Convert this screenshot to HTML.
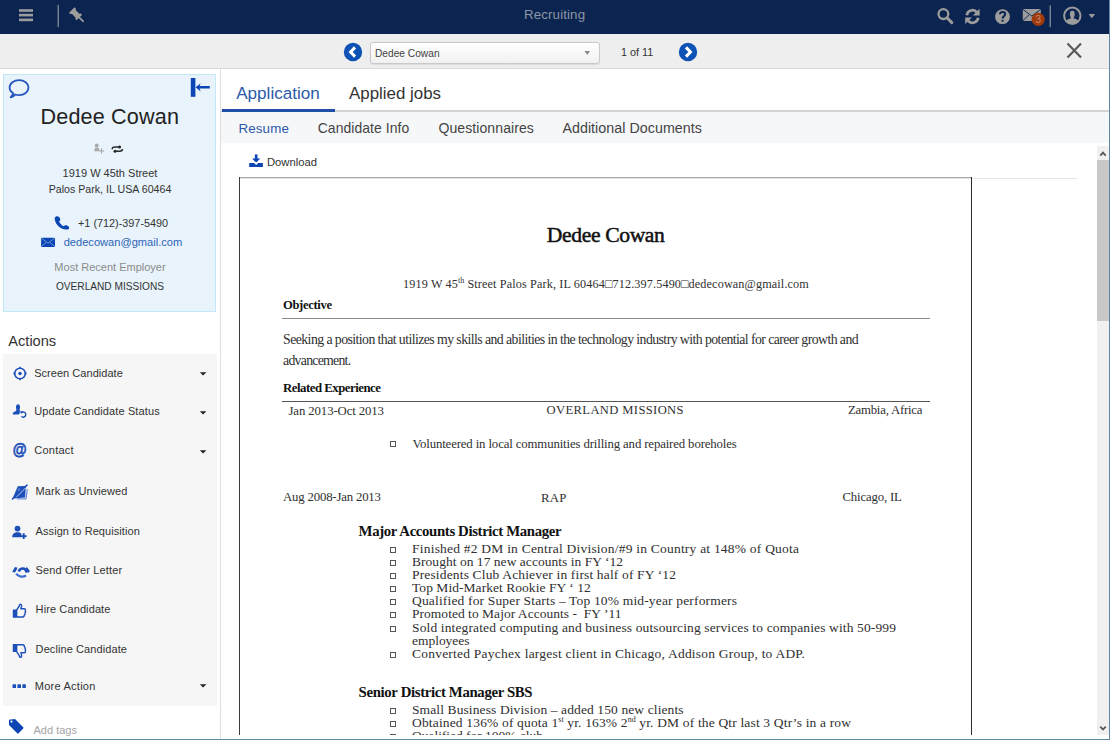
<!DOCTYPE html>
<html><head><meta charset="utf-8"><title>Recruiting</title>
<style>
html,body{margin:0;padding:0;}
body{width:1110px;height:740px;overflow:hidden;position:relative;background:#fff;font-family:'Liberation Sans', sans-serif;}
</style></head><body>
<div style="position:absolute;left:0px;top:0px;width:1110px;height:34px;background:#0b2550;"></div>
<svg style="position:absolute;left:0px;top:0px;" width="100" height="34" viewBox="0 0 100 34"><rect x="19" y="9.2" width="14" height="2.6" fill="#9c9c9c"/><rect x="19" y="13.8" width="14" height="2.6" fill="#9c9c9c"/><rect x="19" y="18.6" width="14" height="2.6" fill="#9c9c9c"/><rect x="57.6" y="5" width="1.2" height="22" fill="#8d95a0"/><g transform="translate(72.6,10.8) rotate(-45)" fill="#9c9c9c"><path d="M-3.9 -1.2 L3.9 -1.2 L3.9 0.9 L2.7 1.6 L2.7 7 L3.9 7.7 L3.9 9.6 L-3.9 9.6 L-3.9 7.7 L-2.7 7 L-2.7 1.6 L-3.9 0.9 Z"/><rect x="-0.85" y="9" width="1.7" height="6.6" rx="0.6"/></g></svg>
<div style="position:absolute;left:-45.39999999999998px;width:1200px;text-align:center;top:5.40px;height:20px;line-height:20px;font-family:'Liberation Sans', sans-serif;font-size:13.3px;font-weight:normal;color:#8d96a6;white-space:pre;letter-spacing:0.125px;">Recruiting</div>
<svg style="position:absolute;left:930px;top:0px;" width="180" height="34" viewBox="0 0 180 34"><circle cx="13.4" cy="14.1" r="4.9" fill="none" stroke="#9c9c9c" stroke-width="2.3"/><line x1="17" y1="17.8" x2="21.8" y2="22.6" stroke="#9c9c9c" stroke-width="2.9" stroke-linecap="round"/><g fill="none" stroke="#9c9c9c" stroke-width="2.7"><path d="M36.8 15.2 A5.8 5.8 0 0 1 47 12.3"/><path d="M48.2 17.8 A5.8 5.8 0 0 1 38 20.7"/></g><path d="M49.6 8.8 L49.6 15.6 L42.8 15.6 Z" fill="#9c9c9c"/><path d="M35.2 24 L35.2 17.4 L42 17.4 Z" fill="#9c9c9c"/><circle cx="72.5" cy="16.7" r="7.4" fill="#9c9c9c"/><path d="M70 14.2 C70 11.2 75.2 11.2 75.2 14.2 C75.2 16.1 72.6 16.2 72.6 18.4" fill="none" stroke="#0b2550" stroke-width="2"/><circle cx="72.6" cy="20.8" r="1.15" fill="#0b2550"/><rect x="92.8" y="9" width="18" height="12" rx="1" fill="#9c9c9c"/><path d="M93 9.5 L101.8 16 L110.6 9.5 M93 20.5 L99 15 M110.6 20.5 L104.6 15" stroke="#0b2550" stroke-width="0.9" fill="none"/><circle cx="108.2" cy="19.4" r="6.6" fill="#9e3a0e"/><text x="108.2" y="23.2" font-family="Liberation Sans" font-size="10" text-anchor="middle" fill="#cf8a68">3</text><rect x="119.6" y="5.5" width="1.2" height="21.5" fill="#8d95a0"/><circle cx="142.3" cy="15.8" r="8.2" fill="none" stroke="#9c9c9c" stroke-width="2"/><path d="M142.3 10.8 C144.2 10.8 144.9 12.4 144.7 14.6 C144.5 16.4 143.8 17.4 143.6 18.2 C145.5 18.8 147.6 19.6 148.4 21 C146.8 22.8 144.7 23.8 142.3 23.8 C139.9 23.8 137.8 22.8 136.2 21 C137 19.6 139.1 18.8 141 18.2 C140.8 17.4 140.1 16.4 139.9 14.6 C139.7 12.4 140.4 10.8 142.3 10.8 Z" fill="#9c9c9c"/><path d="M158.6 14 L165.1 14 L161.85 18.2 Z" fill="#9c9c9c"/></svg>
<div style="position:absolute;left:0px;top:34px;width:1110px;height:34px;background:#eeeeee;"></div>
<div style="position:absolute;left:0px;top:68px;width:1110px;height:1px;background:#d9d9d9;"></div>
<svg style="position:absolute;left:340px;top:40px;" width="30" height="26" viewBox="0 0 30 26"><circle cx="13" cy="12" r="9.2" fill="#0f52b5"/><path d="M15 7.4 L10.6 12 L15 16.6" fill="none" stroke="#fff" stroke-width="3" stroke-linejoin="miter"/></svg>
<svg style="position:absolute;left:675px;top:40px;" width="30" height="26" viewBox="0 0 30 26"><circle cx="13" cy="12" r="9.2" fill="#0f52b5"/><path d="M11 7.4 L15.4 12 L11 16.6" fill="none" stroke="#fff" stroke-width="3"/></svg>
<div style="position:absolute;left:370px;top:42px;width:228px;height:20px;background:linear-gradient(#ffffff,#f1f1f1);border:1px solid #c9c9c9;border-radius:3px;box-shadow:0 1px 1px rgba(0,0,0,0.08);"></div>
<div style="position:absolute;left:375px;top:45.60px;height:15px;line-height:15px;font-family:'Liberation Sans', sans-serif;font-size:10.2px;font-weight:normal;color:#444;white-space:pre;">Dedee Cowan</div>
<svg style="position:absolute;left:580px;top:48px;" width="14" height="10" viewBox="0 0 14 10"><path d="M4.5 3 L10 3 L7.25 7 Z" fill="#888"/></svg>
<div style="position:absolute;left:621px;top:44.00px;height:16px;line-height:16px;font-family:'Liberation Sans', sans-serif;font-size:10.8px;font-weight:normal;color:#333;white-space:pre;">1 of 11</div>
<svg style="position:absolute;left:1060px;top:38px;" width="30" height="28" viewBox="0 0 30 28"><path d="M7.5 5.5 L21 19.5 M21 5.5 L7.5 19.5" stroke="#5a5a5a" stroke-width="2.2"/></svg>
<div style="position:absolute;left:220px;top:69px;width:1px;height:671px;background:#dedede;"></div>
<div style="position:absolute;left:3px;top:74px;width:211px;height:236px;background:#e9f3fb;border:1px solid #c4e7f6;"></div>
<svg style="position:absolute;left:4px;top:74px;" width="30" height="26" viewBox="0 0 30 26"><path d="M9.2 19.2 C6.8 17.9 5.6 15.9 5.6 13.6 C5.6 9.3 10 6.1 15.1 6.1 C20.2 6.1 24.5 9.3 24.5 13.6 C24.5 17.9 20.2 21.1 15.1 21.1 C13.6 21.1 12.4 20.9 11.3 20.5 C10.2 21.6 8.6 22.8 6.6 23.3 C7.8 22.1 8.8 20.8 9.2 19.2 Z" fill="none" stroke="#2456bd" stroke-width="1.8" stroke-linejoin="round"/></svg>
<svg style="position:absolute;left:185px;top:74px;" width="30" height="26" viewBox="0 0 30 26"><rect x="5.8" y="4" width="4.6" height="18.8" fill="#0c45b4"/><path d="M10.6 13.3 L15.6 9.2 L14.6 12.1 L24.8 12.1 L24.8 14.6 L14.6 14.6 L15.6 17.4 Z" fill="#0c45b4"/></svg>
<div style="position:absolute;left:-490.2px;width:1200px;text-align:center;top:100.70px;height:32px;line-height:32px;font-family:'Liberation Sans', sans-serif;font-size:21.6px;font-weight:normal;color:#222;white-space:pre;letter-spacing:0.164px;">Dedee Cowan</div>
<svg style="position:absolute;left:90px;top:140px;" width="40" height="18" viewBox="0 0 40 18"><g fill="#a9a9a9"><circle cx="6.7" cy="5.4" r="1.9"/><path d="M4.3 11.2 C4.3 8.4 5.2 7.5 6.8 7.5 C8 7.5 8.8 8 9.2 9 L9.2 11.2 Z"/><rect x="8.9" y="10.4" width="5.2" height="1.1"/><rect x="10.95" y="8.3" width="1.1" height="5.3"/></g><g fill="none" stroke="#2a2a2a" stroke-width="1.5"><path d="M22.2 9.2 C22.2 7.4 23.2 7 25.2 7 L29.4 7"/><path d="M32.5 9 C32.5 10.8 31.5 11.2 29.5 11.2 L25.2 11.2"/></g><circle cx="29.6" cy="7" r="1.55" fill="#2a2a2a"/><circle cx="25.1" cy="11.2" r="1.55" fill="#2a2a2a"/></svg>
<div style="position:absolute;left:-490px;width:1200px;text-align:center;top:164.90px;height:16px;line-height:16px;font-family:'Liberation Sans', sans-serif;font-size:11px;font-weight:normal;color:#333;white-space:pre;">1919 W 45th Street</div>
<div style="position:absolute;left:-490px;width:1200px;text-align:center;top:181.30px;height:16px;line-height:16px;font-family:'Liberation Sans', sans-serif;font-size:10.65px;font-weight:normal;color:#333;white-space:pre;">Palos Park, IL USA 60464</div>
<svg style="position:absolute;left:50px;top:212px;" width="24" height="22" viewBox="0 0 24 22"><path d="M6.6 4.2 C5 4.4 4.5 6 4.8 7.8 C5.7 12.8 10.8 17.5 16 17.6 C17.8 17.7 19.2 17 19.2 15.7 C19.2 14.7 18 13.9 16.3 13.3 C15.1 13 14.3 13.6 13.6 14.3 C11.6 13.1 10.1 11.4 9.1 9.4 C9.9 8.8 10.4 8.1 10.2 7 C9.9 5.4 8.6 4 6.6 4.2 Z" fill="#0c45b4"/></svg>
<div style="position:absolute;left:78px;top:215.00px;height:16px;line-height:16px;font-family:'Liberation Sans', sans-serif;font-size:10.85px;font-weight:normal;color:#333;white-space:pre;">+1 (712)-397-5490</div>
<svg style="position:absolute;left:38px;top:234px;" width="20" height="16" viewBox="0 0 20 16"><rect x="3.1" y="3.8" width="13.9" height="9.1" rx="1" fill="#0c45b4"/><path d="M3.6 4.3 L10 9.2 L16.5 4.3 M3.6 12.4 L8.3 8.2 M16.5 12.4 L11.8 8.2" stroke="#7fa5e0" stroke-width="0.8" fill="none"/></svg>
<div style="position:absolute;left:63.7px;top:234.10px;height:17px;line-height:17px;font-family:'Liberation Sans', sans-serif;font-size:11.1px;font-weight:normal;color:#2d63b8;white-space:pre;">dedecowan@gmail.com</div>
<div style="position:absolute;left:-490px;width:1200px;text-align:center;top:259.30px;height:16px;line-height:16px;font-family:'Liberation Sans', sans-serif;font-size:11px;font-weight:normal;color:#8b8b8b;white-space:pre;">Most Recent Employer</div>
<div style="position:absolute;left:-490px;width:1200px;text-align:center;top:279.40px;height:15px;line-height:15px;font-family:'Liberation Sans', sans-serif;font-size:10.15px;font-weight:normal;color:#333;white-space:pre;">OVERLAND MISSIONS</div>
<div style="position:absolute;left:8.3px;top:330.40px;height:22px;line-height:22px;font-family:'Liberation Sans', sans-serif;font-size:14.6px;font-weight:normal;color:#333;white-space:pre;">Actions</div>
<div style="position:absolute;left:3px;top:354px;width:214px;height:352px;background:#f6f6f6;"></div>
<div style="position:absolute;left:34.2px;top:364.90px;height:16px;line-height:16px;font-family:'Liberation Sans', sans-serif;font-size:11px;font-weight:normal;color:#333;white-space:pre;letter-spacing:0.036px;">Screen Candidate</div>
<svg style="position:absolute;left:196px;top:368.2px;" width="14" height="10" viewBox="0 0 14 10"><path d="M3.8 4.2 L10.4 4.2 L7.1 7.6 Z" fill="#222"/></svg>
<div style="position:absolute;left:34.2px;top:403.30px;height:16px;line-height:16px;font-family:'Liberation Sans', sans-serif;font-size:11px;font-weight:normal;color:#333;white-space:pre;letter-spacing:0.117px;">Update Candidate Status</div>
<svg style="position:absolute;left:196px;top:406.8px;" width="14" height="10" viewBox="0 0 14 10"><path d="M3.8 4.2 L10.4 4.2 L7.1 7.6 Z" fill="#222"/></svg>
<div style="position:absolute;left:34.2px;top:442.00px;height:16px;line-height:16px;font-family:'Liberation Sans', sans-serif;font-size:11px;font-weight:normal;color:#333;white-space:pre;letter-spacing:0.263px;">Contact</div>
<svg style="position:absolute;left:196px;top:446.0px;" width="14" height="10" viewBox="0 0 14 10"><path d="M3.8 4.2 L10.4 4.2 L7.1 7.6 Z" fill="#222"/></svg>
<div style="position:absolute;left:35.6px;top:483.30px;height:16px;line-height:16px;font-family:'Liberation Sans', sans-serif;font-size:11px;font-weight:normal;color:#333;white-space:pre;letter-spacing:0.088px;">Mark as Unviewed</div>
<div style="position:absolute;left:35.6px;top:522.60px;height:16px;line-height:16px;font-family:'Liberation Sans', sans-serif;font-size:11px;font-weight:normal;color:#333;white-space:pre;letter-spacing:0.073px;">Assign to Requisition</div>
<div style="position:absolute;left:35.6px;top:562.00px;height:16px;line-height:16px;font-family:'Liberation Sans', sans-serif;font-size:11px;font-weight:normal;color:#333;white-space:pre;letter-spacing:0.151px;">Send Offer Letter</div>
<div style="position:absolute;left:35.6px;top:601.40px;height:16px;line-height:16px;font-family:'Liberation Sans', sans-serif;font-size:11px;font-weight:normal;color:#333;white-space:pre;letter-spacing:0.110px;">Hire Candidate</div>
<div style="position:absolute;left:35.6px;top:640.80px;height:16px;line-height:16px;font-family:'Liberation Sans', sans-serif;font-size:11px;font-weight:normal;color:#333;white-space:pre;letter-spacing:0.094px;">Decline Candidate</div>
<div style="position:absolute;left:34.8px;top:677.90px;height:16px;line-height:16px;font-family:'Liberation Sans', sans-serif;font-size:11px;font-weight:normal;color:#333;white-space:pre;letter-spacing:0.241px;">More Action</div>
<svg style="position:absolute;left:196px;top:679.8px;" width="14" height="10" viewBox="0 0 14 10"><path d="M3.8 4.2 L10.4 4.2 L7.1 7.6 Z" fill="#222"/></svg>
<svg style="position:absolute;left:10px;top:364px;" width="20" height="20" viewBox="0 0 20 20"><circle cx="10" cy="9.5" r="5.3" fill="none" stroke="#1d4fb8" stroke-width="1.6"/><circle cx="10" cy="9.5" r="1.7" fill="#1d4fb8"/><g stroke="#1d4fb8" stroke-width="1.5"><line x1="10" y1="2.8" x2="10" y2="4.8"/><line x1="10" y1="14.2" x2="10" y2="16.2"/><line x1="3.3" y1="9.5" x2="5.3" y2="9.5"/><line x1="14.7" y1="9.5" x2="16.7" y2="9.5"/></g></svg>
<svg style="position:absolute;left:10px;top:402px;" width="20" height="20" viewBox="0 0 20 20"><g fill="#1d4fb8"><ellipse cx="8" cy="5.3" rx="2" ry="3.1"/><path d="M6.2 7.6 L9.8 7.6 L9.8 10.5 C9.8 12 9 12.5 7.6 12.5 L3.8 12.5 C2.6 12.5 2.5 11.6 3 10.9 C3.7 10 5 9.4 6.2 9.1 Z"/></g><path d="M11.2 10.6 C12.5 9.6 15.8 9.8 15.8 12.6 C15.8 15.2 12.6 15.8 11.4 14.4" fill="none" stroke="#1d4fb8" stroke-width="1.4"/><path d="M10.2 9 L13.2 9.6 L11 12 Z" fill="#1d4fb8"/></svg>
<svg style="position:absolute;left:10px;top:439px;" width="20" height="20" viewBox="0 0 20 20"><text transform="translate(9.6,0) scale(0.92,1.08)" x="0" y="14.9" font-family="Liberation Sans" font-weight="bold" font-size="15.5" text-anchor="middle" fill="#1d4fb8" stroke="#1d4fb8" stroke-width="0.6">@</text></svg>
<svg style="position:absolute;left:10px;top:482px;" width="22" height="20" viewBox="0 0 22 20"><path d="M7.8 4.2 L15.8 3.9 L15.2 15.6 L2.6 16.6 Z" fill="#1d4fb8"/><path d="M17.3 6.9 L16.1 16.9 L6.9 16.9" fill="none" stroke="#4f7ad8" stroke-width="1"/><path d="M2.5 17 L17 3.1" stroke="#1d4fb8" stroke-width="1.6" stroke-linecap="round"/><path d="M6.6 14.9 L15.6 5.9" stroke="#c9d8f4" stroke-width="0.9"/><path d="M8.2 7 L10.2 7 M7.8 8.6 L9.4 8.6" stroke="#8fa9e4" stroke-width="0.8"/></svg>
<svg style="position:absolute;left:10px;top:523px;" width="20" height="20" viewBox="0 0 20 20"><g fill="#1d4fb8"><circle cx="7.5" cy="5.6" r="2.9"/><path d="M2.2 14.3 C2.2 10.6 4.3 9.2 7.5 9.2 C9.5 9.2 10.6 9.8 11.3 10.6 L11.3 14.3 Z"/><rect x="10.8" y="12.2" width="5.8" height="1.9"/><rect x="12.75" y="10.2" width="1.9" height="5.8"/></g></svg>
<svg style="position:absolute;left:10px;top:564px;" width="22" height="18" viewBox="0 0 22 18"><g fill="#1d4fb8"><path d="M2.2 7.9 L4.9 3 L7.7 3.7 L5 8.6 Z"/><path d="M16.9 2.9 L20 7.3 L18.3 8.7 L15.3 4.5 Z"/></g><g fill="none" stroke="#1d4fb8" stroke-linecap="butt"><path d="M8.6 7.6 C9.6 5.2 11 4.6 13 4.6 C14.8 4.6 16 6.2 16.9 8.6" stroke-width="2.5"/><path d="M6.2 9.6 C8.4 12.8 12.6 13.6 16 11.5" stroke-width="2.3" stroke="#3f6fd4"/></g></svg>
<svg style="position:absolute;left:10px;top:601px;" width="20" height="20" viewBox="0 0 20 20"><g transform="translate(0.4,0) scale(0.92,1)"><path d="M3.3 9.3 L6.3 9.3 L6.3 15.9 L3.3 15.9 Z M6.8 9 L9.6 5 C9.9 3.6 10.6 3 11.5 3.4 C12.6 3.9 12.2 5.8 11.4 7.8 L15 7.8 C16.3 7.8 16.7 8.9 16.1 10 C16.8 10.7 16.5 11.6 15.8 12 C16.2 12.8 15.8 13.6 15.1 13.9 C15.3 15 14.7 15.9 13.4 15.9 L6.8 15.9 Z" fill="none" stroke="#1d4fb8" stroke-width="1.5" stroke-linejoin="round"/><rect x="3" y="9.2" width="3.6" height="6.9" fill="#1d4fb8"/></g></svg>
<svg style="position:absolute;left:10px;top:641px;" width="20" height="20" viewBox="0 0 20 20"><g transform="translate(0.4,19.6) scale(0.92,-1)"><path d="M3.3 9.3 L6.3 9.3 L6.3 15.9 L3.3 15.9 Z M6.8 9 L9.6 5 C9.9 3.6 10.6 3 11.5 3.4 C12.6 3.9 12.2 5.8 11.4 7.8 L15 7.8 C16.3 7.8 16.7 8.9 16.1 10 C16.8 10.7 16.5 11.6 15.8 12 C16.2 12.8 15.8 13.6 15.1 13.9 C15.3 15 14.7 15.9 13.4 15.9 L6.8 15.9 Z" fill="none" stroke="#1d4fb8" stroke-width="1.5" stroke-linejoin="round"/><rect x="3" y="9.2" width="3.6" height="6.9" fill="#1d4fb8"/></g></svg>
<svg style="position:absolute;left:10px;top:680px;" width="20" height="12" viewBox="0 0 20 12"><g fill="#1d4fb8"><rect x="2.5" y="4.3" width="3.6" height="3.8" rx="0.6"/><rect x="7.4" y="4.3" width="3.6" height="3.8" rx="0.6"/><rect x="12.3" y="4.3" width="3.6" height="3.8" rx="0.6"/></g></svg>
<svg style="position:absolute;left:4px;top:714px;" width="24" height="24" viewBox="0 0 24 24"><path d="M5 5.8 L11 5 L19.2 13.2 C19.6 13.6 19.6 14.2 19.2 14.6 L14.6 19.2 C14.2 19.6 13.6 19.6 13.2 19.2 L5 11 Z" fill="#0c45b4"/><circle cx="7.5" cy="7.6" r="1.1" fill="#fff"/></svg>
<div style="position:absolute;left:33.5px;top:721.80px;height:16px;line-height:16px;font-family:'Liberation Sans', sans-serif;font-size:11px;font-weight:normal;color:#a5a5a5;white-space:pre;">Add tags</div>
<div style="position:absolute;left:236.2px;top:80.50px;height:26px;line-height:26px;font-family:'Liberation Sans', sans-serif;font-size:17.1px;font-weight:normal;color:#2c5aa8;white-space:pre;">Application</div>
<div style="position:absolute;left:349px;top:81.00px;height:25px;line-height:25px;font-family:'Liberation Sans', sans-serif;font-size:16.9px;font-weight:normal;color:#333;white-space:pre;">Applied jobs</div>
<div style="position:absolute;left:221px;top:110px;width:888px;height:1.5px;background:#d4d4d4;"></div>
<div style="position:absolute;left:222px;top:109px;width:113px;height:3.2px;background:#1f4fa6;"></div>
<div style="position:absolute;left:221px;top:112px;width:888px;height:30.5px;background:#f6f7f9;"></div>
<div style="position:absolute;left:238.4px;top:119.10px;height:20px;line-height:20px;font-family:'Liberation Sans', sans-serif;font-size:13.35px;font-weight:normal;color:#2c5aa8;white-space:pre;letter-spacing:0.163px;">Resume</div>
<div style="position:absolute;left:317.7px;top:118.10px;height:21px;line-height:21px;font-family:'Liberation Sans', sans-serif;font-size:13.96px;font-weight:normal;color:#444;white-space:pre;letter-spacing:0.056px;">Candidate Info</div>
<div style="position:absolute;left:438.4px;top:118.10px;height:21px;line-height:21px;font-family:'Liberation Sans', sans-serif;font-size:14.05px;font-weight:normal;color:#444;white-space:pre;letter-spacing:0.078px;">Questionnaires</div>
<div style="position:absolute;left:562.4px;top:118.10px;height:21px;line-height:21px;font-family:'Liberation Sans', sans-serif;font-size:14.25px;font-weight:normal;color:#444;white-space:pre;letter-spacing:0.046px;">Additional Documents</div>
<svg style="position:absolute;left:246px;top:150px;" width="20" height="20" viewBox="0 0 20 20"><g fill="#0c45b4"><rect x="8.9" y="4.4" width="2.6" height="4.6"/><path d="M6.1 8.5 L14.3 8.5 L10.2 12.6 Z"/><path d="M3.2 12.9 L8.1 12.9 L10.2 14.9 L12.3 12.9 L16.9 12.9 L16.9 17 L3.2 17 Z"/></g></svg>
<div style="position:absolute;left:266.9px;top:153.90px;height:17px;line-height:17px;font-family:'Liberation Sans', sans-serif;font-size:11.25px;font-weight:normal;color:#333;white-space:pre;">Download</div>
<div style="position:absolute;left:239px;top:177.5px;width:838px;height:1px;background:#e4e4e4;"></div>
<div style="position:absolute;left:240px;top:177px;width:731px;height:1px;background:#a8a8a8;"></div>
<div style="position:absolute;left:239px;top:177px;width:1.3px;height:558px;background:#3a3a3a;"></div>
<div style="position:absolute;left:970.5px;top:177px;width:1.3px;height:558px;background:#2a2a2a;"></div>
<div style="position:absolute;left:1097px;top:146px;width:12px;height:589px;background:#f0f0f0;"></div>
<div style="position:absolute;left:1097px;top:160px;width:12px;height:161px;background:#c8c8c8;"></div>
<svg style="position:absolute;left:1097px;top:146px;" width="12" height="14" viewBox="0 0 12 14"><path d="M3.3 9.6 L6 6.6 L8.7 9.6" fill="none" stroke="#555" stroke-width="1.7"/></svg>
<svg style="position:absolute;left:1097px;top:718px;" width="12" height="18" viewBox="0 0 12 18"><path d="M3.3 8.6 L6 11.6 L8.7 8.6" fill="none" stroke="#555" stroke-width="1.7"/></svg>
<div style="position:absolute;left:5.7000000000000455px;width:1200px;text-align:center;top:219.00px;height:32px;line-height:32px;font-family:'Liberation Serif', serif;font-size:21.6px;font-weight:normal;color:#111;white-space:pre;letter-spacing:-0.372px;-webkit-text-stroke:0.5px #111;">Dedee Cowan</div>
<div style="position:absolute;left:6px;width:1200px;text-align:center;top:275.20px;height:18px;line-height:18px;font-family:'Liberation Serif', serif;font-size:12.2px;font-weight:normal;color:#303030;white-space:pre;letter-spacing:0.134px;">1919 W 45<sup style="font-size:8px;vertical-align:5px;line-height:0;letter-spacing:0">th</sup> Street Palos Park, IL 60464□712.397.5490□dedecowan@gmail.com</div>
<div style="position:absolute;left:283px;top:295.90px;height:19px;line-height:19px;font-family:'Liberation Serif', serif;font-size:12.6px;font-weight:bold;color:#111;white-space:pre;letter-spacing:-0.346px;">Objective</div>
<div style="position:absolute;left:281.5px;top:317.5px;width:648.5px;height:1.2px;background:#8a8a8a;"></div>
<div style="position:absolute;left:283.1px;top:328.90px;height:21px;line-height:21px;font-family:'Liberation Serif', serif;font-size:13.8px;font-weight:normal;color:#303030;white-space:pre;letter-spacing:-0.573px;">Seeking a position that utilizes my skills and abilities in the technology industry with potential for career growth and</div>
<div style="position:absolute;left:283.1px;top:349.60px;height:21px;line-height:21px;font-family:'Liberation Serif', serif;font-size:13.8px;font-weight:normal;color:#303030;white-space:pre;letter-spacing:-0.749px;">advancement.</div>
<div style="position:absolute;left:283px;top:379.10px;height:19px;line-height:19px;font-family:'Liberation Serif', serif;font-size:12.8px;font-weight:bold;color:#111;white-space:pre;letter-spacing:-0.486px;">Related Experience</div>
<div style="position:absolute;left:281.5px;top:401px;width:648.5px;height:1.2px;background:#555;"></div>
<div style="position:absolute;left:288.5px;top:401.50px;height:19px;line-height:19px;font-family:'Liberation Serif', serif;font-size:12.8px;font-weight:normal;color:#303030;white-space:pre;letter-spacing:-0.118px;">Jan 2013-Oct 2013</div>
<div style="position:absolute;left:546.6px;top:401.00px;height:19px;line-height:19px;font-family:'Liberation Serif', serif;font-size:12.6px;font-weight:normal;color:#303030;white-space:pre;letter-spacing:0.362px;">OVERLAND MISSIONS</div>
<div style="position:absolute;left:847.9px;top:401.30px;height:19px;line-height:19px;font-family:'Liberation Serif', serif;font-size:12.8px;font-weight:normal;color:#303030;white-space:pre;letter-spacing:-0.221px;">Zambia, Africa</div>
<div style="position:absolute;left:390.3px;top:441px;width:6.2px;height:6.2px;border:1.2px solid #555;box-sizing:border-box;"></div>
<div style="position:absolute;left:412.5px;top:434.90px;height:19px;line-height:19px;font-family:'Liberation Serif', serif;font-size:12.8px;font-weight:normal;color:#303030;white-space:pre;letter-spacing:-0.134px;">Volunteered in local communities drilling and repaired boreholes</div>
<div style="position:absolute;left:283px;top:487.70px;height:19px;line-height:19px;font-family:'Liberation Serif', serif;font-size:12.8px;font-weight:normal;color:#303030;white-space:pre;letter-spacing:-0.185px;">Aug 2008-Jan 2013</div>
<div style="position:absolute;left:541px;top:488.70px;height:19px;line-height:19px;font-family:'Liberation Serif', serif;font-size:12.8px;font-weight:normal;color:#303030;white-space:pre;letter-spacing:0.247px;">RAP</div>
<div style="position:absolute;left:842.5px;top:487.80px;height:19px;line-height:19px;font-family:'Liberation Serif', serif;font-size:12.8px;font-weight:normal;color:#303030;white-space:pre;letter-spacing:-0.173px;">Chicago, IL</div>
<div style="position:absolute;left:358.6px;top:519.70px;height:22px;line-height:22px;font-family:'Liberation Serif', serif;font-size:14.8px;font-weight:bold;color:#111;white-space:pre;letter-spacing:-0.361px;">Major Accounts District Manager</div>
<div style="position:absolute;left:390.3px;top:547.0px;width:6.2px;height:6.2px;border:1.2px solid #555;box-sizing:border-box;"></div>
<div style="position:absolute;left:412px;top:538.80px;height:20px;line-height:20px;font-family:'Liberation Serif', serif;font-size:13.5px;font-weight:normal;color:#303030;white-space:pre;letter-spacing:0.217px;">Finished #2 DM in Central Division/#9 in Country at 148% of Quota</div>
<div style="position:absolute;left:390.3px;top:559.9000000000001px;width:6.2px;height:6.2px;border:1.2px solid #555;box-sizing:border-box;"></div>
<div style="position:absolute;left:412px;top:551.70px;height:20px;line-height:20px;font-family:'Liberation Serif', serif;font-size:13.5px;font-weight:normal;color:#303030;white-space:pre;letter-spacing:0.033px;">Brought on 17 new accounts in FY ‘12</div>
<div style="position:absolute;left:390.3px;top:572.9000000000001px;width:6.2px;height:6.2px;border:1.2px solid #555;box-sizing:border-box;"></div>
<div style="position:absolute;left:412px;top:564.70px;height:20px;line-height:20px;font-family:'Liberation Serif', serif;font-size:13.5px;font-weight:normal;color:#303030;white-space:pre;letter-spacing:0.155px;">Presidents Club Achiever in first half of FY ‘12</div>
<div style="position:absolute;left:390.3px;top:586.2px;width:6.2px;height:6.2px;border:1.2px solid #555;box-sizing:border-box;"></div>
<div style="position:absolute;left:412px;top:578.00px;height:20px;line-height:20px;font-family:'Liberation Serif', serif;font-size:13.5px;font-weight:normal;color:#303030;white-space:pre;letter-spacing:0.046px;">Top Mid-Market Rookie FY ‘ 12</div>
<div style="position:absolute;left:390.3px;top:599.2px;width:6.2px;height:6.2px;border:1.2px solid #555;box-sizing:border-box;"></div>
<div style="position:absolute;left:412px;top:591.00px;height:20px;line-height:20px;font-family:'Liberation Serif', serif;font-size:13.5px;font-weight:normal;color:#303030;white-space:pre;letter-spacing:0.164px;">Qualified for Super Starts – Top 10% mid-year performers</div>
<div style="position:absolute;left:390.3px;top:612.2px;width:6.2px;height:6.2px;border:1.2px solid #555;box-sizing:border-box;"></div>
<div style="position:absolute;left:412px;top:604.00px;height:20px;line-height:20px;font-family:'Liberation Serif', serif;font-size:13.5px;font-weight:normal;color:#303030;white-space:pre;letter-spacing:0.028px;">Promoted to Major Accounts -  FY ’11</div>
<div style="position:absolute;left:390.3px;top:625.9000000000001px;width:6.2px;height:6.2px;border:1.2px solid #555;box-sizing:border-box;"></div>
<div style="position:absolute;left:412px;top:617.70px;height:20px;line-height:20px;font-family:'Liberation Serif', serif;font-size:13.5px;font-weight:normal;color:#303030;white-space:pre;letter-spacing:0.130px;">Sold integrated computing and business outsourcing services to companies with 50-999</div>
<div style="position:absolute;left:412px;top:630.50px;height:20px;line-height:20px;font-family:'Liberation Serif', serif;font-size:13.5px;font-weight:normal;color:#303030;white-space:pre;letter-spacing:-0.029px;">employees</div>
<div style="position:absolute;left:390.3px;top:652.2px;width:6.2px;height:6.2px;border:1.2px solid #555;box-sizing:border-box;"></div>
<div style="position:absolute;left:412px;top:644.00px;height:20px;line-height:20px;font-family:'Liberation Serif', serif;font-size:13.5px;font-weight:normal;color:#303030;white-space:pre;letter-spacing:0.220px;">Converted Paychex largest client in Chicago, Addison Group, to ADP.</div>
<div style="position:absolute;left:358.6px;top:680.50px;height:22px;line-height:22px;font-family:'Liberation Serif', serif;font-size:14.8px;font-weight:bold;color:#111;white-space:pre;letter-spacing:-0.353px;">Senior District Manager SBS</div>
<div style="position:absolute;left:390.3px;top:708.2px;width:6.2px;height:6.2px;border:1.2px solid #555;box-sizing:border-box;"></div>
<div style="position:absolute;left:412px;top:700.00px;height:20px;line-height:20px;font-family:'Liberation Serif', serif;font-size:13.5px;font-weight:normal;color:#303030;white-space:pre;letter-spacing:0.108px;">Small Business Division – added 150 new clients</div>
<div style="position:absolute;left:390.3px;top:721.2px;width:6.2px;height:6.2px;border:1.2px solid #555;box-sizing:border-box;"></div>
<div style="position:absolute;left:412px;top:713.00px;height:20px;line-height:20px;font-family:'Liberation Serif', serif;font-size:13.5px;font-weight:normal;color:#303030;white-space:pre;letter-spacing:0.162px;">Obtained 136% of quota 1<sup style="font-size:8px;vertical-align:5px;line-height:0;letter-spacing:0">st</sup> yr. 163% 2<sup style="font-size:8px;vertical-align:5px;line-height:0;letter-spacing:0">nd</sup> yr. DM of the Qtr last 3 Qtr’s in a row</div>
<div style="position:absolute;left:390.3px;top:734.2px;width:6.2px;height:6.2px;border:1.2px solid #555;box-sizing:border-box;"></div>
<div style="position:absolute;left:412px;top:726.00px;height:20px;line-height:20px;font-family:'Liberation Serif', serif;font-size:13.5px;font-weight:normal;color:#303030;white-space:pre;letter-spacing:-0.027px;">Qualified for 100% club</div>
<div style="position:absolute;left:221px;top:735px;width:876px;height:4px;background:#fff;"></div>
<div style="position:absolute;left:1109px;top:0px;width:1px;height:740px;background:#5e89a8;"></div>
<div style="position:absolute;left:0px;top:739px;width:1110px;height:1px;background:#5e89a8;"></div>
</body></html>
